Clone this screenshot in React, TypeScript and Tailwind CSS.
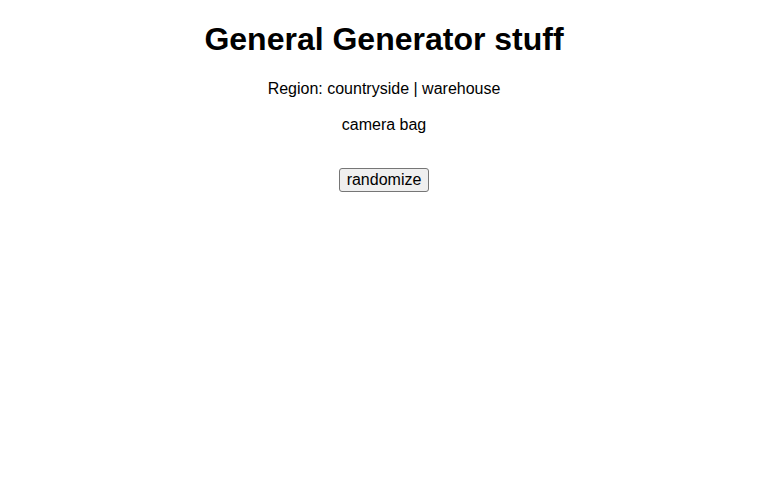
import React, { useState } from 'react';

const regions = ['countryside', 'city', 'forest', 'coast'];
const spots = ['warehouse', 'farmhouse', 'office', 'garage'];
const items = ['camera bag', 'toolbox', 'lantern', 'backpack'];

const pick = (list: string[]) => list[Math.floor(Math.random() * list.length)];

const App: React.FC = () => {
  const [region, setRegion] = useState('countryside');
  const [spot, setSpot] = useState('warehouse');
  const [item, setItem] = useState('camera bag');

  const randomize = () => {
    setRegion(pick(regions));
    setSpot(pick(spots));
    setItem(pick(items));
  };

  return (
    <div className="min-h-screen bg-white text-black text-center font-['Liberation_Sans',Arial,sans-serif]">
      <h1 className="pt-[21px] mb-[21px] text-[32px] font-bold leading-[37px]">General Generator stuff</h1>
      <p className="my-4 text-base leading-[20px]">
        Region: {region} | {spot}
      </p>
      <p className="my-4 text-base leading-[20px]">{item}</p>
      <div className="mt-[33px]">
        <button
          onClick={randomize}
          className="h-[24px] px-[7px] border border-[#767676] rounded-[3px] bg-[#efefef] text-base leading-[20px] text-black"
        >
          randomize
        </button>
      </div>
    </div>
  );
};

export default App;
